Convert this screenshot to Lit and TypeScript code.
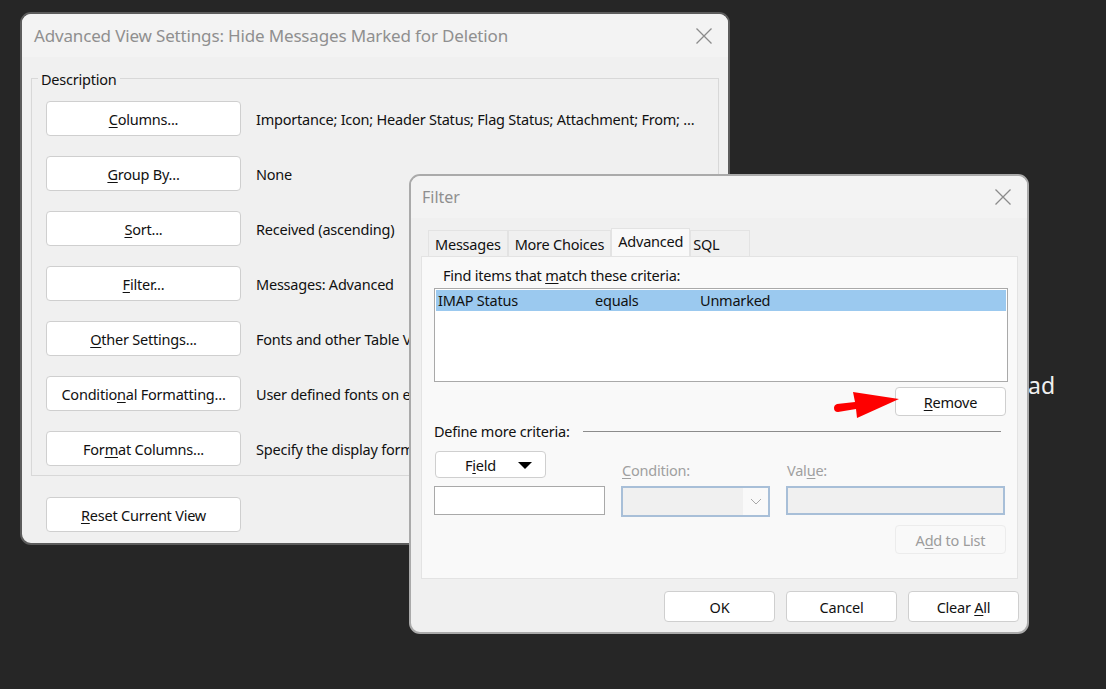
import { LitElement, html, css } from "lit";
import { customElement } from "lit/decorators.js";

const closeIcon = html`<svg class="x" viewBox="0 0 16 16" width="16" height="16"><path d="M.5.5l15 15M15.500.5l-15 15" stroke="#8b8b8b" stroke-width="1.300" fill="none"/></svg>`;

@customElement("app-root")
export class AppRoot extends LitElement {
  static styles = css`
    :host { display: block; position: relative; width: 1106px; height: 689px; overflow: hidden; background: #262626;
      font-family: "Noto Sans", "Open Sans", sans-serif; font-size: 14.5px; letter-spacing: -0.22px; color: #111; }
    u { text-underline-offset: 2px; text-decoration-thickness: 1px; }
    .bg-text { position: absolute; left: 1028px; top: 369px; color: #f0f0f0; font-size: 23px; line-height: 32px; letter-spacing: 0; }
    .win { position: absolute; box-sizing: border-box; display: flex; flex-direction: column; background: #f0f0f0; border: 2px solid #6e6e6e; border-radius: 11px; overflow: hidden; }
    .main { left: 20px; top: 12px; width: 710px; height: 533px; border-color: #5c5c5c; }
    .filter { left: 409px; top: 174px; width: 620px; height: 460px; border-color: #aaaaaa; }
    .title { flex: none; display: flex; align-items: center; justify-content: space-between; background: #f3f3f3; color: #8f8f8f; }
    .main .title { height: 43px; padding: 0 16px 0 12px; font-size: 17px; letter-spacing: -0.16px; }
    .filter .title { height: 42px; padding: 0 16px 0 11px; font-size: 16px; letter-spacing: 0; }
    .x { display: block; flex: none; }
    .btn { box-sizing: border-box; display: flex; align-items: center; justify-content: center; background: #fff; border: 1px solid #cfcfcf; border-radius: 4px; white-space: nowrap; flex: none; }
    .main-body { flex: 1; padding: 21px 9px 0; display: flex; flex-direction: column; }
    .group { position: relative; box-sizing: border-box; height: 398px; border: 1px solid #d8d8d8; padding: 22px 14px 0; display: flex; flex-direction: column; gap: 20px; }
    .legend { position: absolute; left: 6px; top: -9px; padding: 0 3px; background: #f0f0f0; line-height: 18px; }
    .row { display: flex; align-items: center; gap: 15px; height: 35px; white-space: nowrap; }
    .wide { width: 195px; height: 35px; }
    .reset { margin: 21px 0 0 15px; }
    .filter-body { flex: 1; display: flex; flex-direction: column; padding: 0 10px; }
    .tabs { display: flex; align-items: flex-end; height: 38px; padding-left: 7px; flex: none; }
    .tab { box-sizing: border-box; height: 26px; padding: 0 6px; display: flex; align-items: center; background: #f0f0f0; border: 1px solid #e3e3e3; border-bottom: none; margin-right: 0; }
    .tab.active { height: 28px; background: #f9f9f9; padding-bottom: 3px; }
    .tab.sql { width: 60px; padding-left: 2px; }
    .panel { box-sizing: border-box; width: 597px; height: 323px; background: #f9f9f9; border: 1px solid #e3e3e3; padding: 0 0 0 12px; display: flex; flex-direction: column; flex: none; }
    .find { margin: 9px 0 0 9px; line-height: 18px; height: 22px; }
    .list { box-sizing: border-box; width: 574px; height: 94px; background: #fff; border: 1px solid #a9a9a9; padding: 1px; flex: none; }
    .sel { display: grid; grid-template-columns: 157px 105px 1fr; height: 21px; line-height: 21px; padding-left: 2px; background: #9bc9ef; }
    .remove-row { display: flex; justify-content: flex-end; padding-right: 11px; margin-top: 5px; }
    .small { width: 111px; height: 29px; }
    .define { display: flex; align-items: center; gap: 13px; height: 18px; margin-top: 6px; padding-right: 16px; }
    .define i { flex: 1; height: 1px; background: #8c8c8c; }
    .fields { display: grid; grid-template-columns: 171px 149px 219px; column-gap: 16px; margin-top: 9px; height: 66px; align-items: end; }
    .fields > div { display: flex; flex-direction: column; }
    .field-btn { margin-left: 1px; margin-bottom: 8px; width: 111px; height: 27px; position: relative; padding-right: 20px; }
    .field-btn b { position: absolute; right: 13px; top: 10px; width: 0; height: 0; border: 7px solid transparent; border-top: 7px solid #000; border-bottom: none; }
    .lbl { color: #a0a0a0; line-height: 18px; margin-bottom: 7px; padding-left: 1px; }
    .input { box-sizing: border-box; height: 29px; background: #fff; border: 1px solid #a9a9a9; }
    .dis { background: #f0f0f0; border: 2px solid #a8bfd8; }
    .combo { height: 31px; margin-bottom: -2px; position: relative; }
    .combo span { position: absolute; right: 0; top: 0; bottom: 0; width: 25px; background: #f9f9f9; display: flex; align-items: center; justify-content: center; }
    .add-row { display: flex; justify-content: flex-end; padding-right: 11px; margin-top: 10px; }
    .add { background: #f9f9f9; border-color: #ececec; color: #9c9c9c; }
    .footer { display: flex; justify-content: flex-end; gap: 11px; margin-top: 12px; padding-right: 0; margin-right: -2px; }
    .footer .btn { width: 111px; height: 31px; }
    .arrow { position: absolute; left: 830px; top: 388px; }
  `;

  render() {
    const rows: [any, string, string][] = [
      [html`<u>C</u>olumns...`, "Importance; Icon; Header Status; Flag Status; Attachment; From; ...", ""],
      [html`<u>G</u>roup By...`, "None", ""],
      [html`<u>S</u>ort...`, "Received (ascending)", ""],
      [html`<u>F</u>ilter...`, "Messages: Advanced", ""],
      [html`<u>O</u>ther Settings...`, "Fonts and other Table View settings", ""],
      [html`Conditio<u>n</u>al Formatting...`, "User defined fonts on each message", ""],
      [html`For<u>m</u>at Columns...`, "Specify the display formats for each field", ""],
    ];
    return html`
      <div class="bg-text">ad</div>
      <section class="win main">
        <div class="title"><span>Advanced View Settings: Hide Messages Marked for Deletion</span>${closeIcon}</div>
        <div class="main-body">
          <div class="group">
            <span class="legend">Description</span>
            ${rows.map(r => html`<div class="row"><div class="btn wide">${r[0]}</div><span>${r[1]}</span></div>`)}
          </div>
          <div class="btn wide reset"><span><u>R</u>eset Current View</span></div>
        </div>
      </section>
      <section class="win filter">
        <div class="title"><span>Filter</span>${closeIcon}</div>
        <div class="filter-body">
          <div class="tabs">
            <div class="tab">Messages</div>
            <div class="tab">More Choices</div>
            <div class="tab active">Advanced</div>
            <div class="tab sql">SQL</div>
          </div>
          <div class="panel">
            <div class="find">Find items that <u>m</u>atch these criteria:</div>
            <div class="list"><div class="sel"><span>IMAP Status</span><span>equals</span><span>Unmarked</span></div></div>
            <div class="remove-row"><div class="btn small"><span><u>R</u>emove</span></div></div>
            <div class="define"><span>Define more criteria:</span><i></i></div>
            <div class="fields">
              <div><div class="btn field-btn"><span>F<u>i</u>eld</span><b></b></div><div class="input"></div></div>
              <div><span class="lbl"><u>C</u>ondition:</span><div class="input dis combo"><span><svg width="12" height="7" viewBox="0 0 12 7"><path d="M1 1l5 5 5-5" stroke="#a8a8a8" fill="none"/></svg></span></div></div>
              <div><span class="lbl">Val<u>u</u>e:</span><div class="input dis"></div></div>
            </div>
            <div class="add-row"><div class="btn small add"><span>A<u>d</u>d to List</span></div></div>
          </div>
          <div class="footer">
            <div class="btn">OK</div><div class="btn">Cancel</div><div class="btn"><span>Clear <u>A</u>ll</span></div>
          </div>
        </div>
      </section>
      <svg class="arrow" width="72" height="34" viewBox="830 388 72 34"><path d="M837 404L855 402L853 392L899 399L857 418L856 409L838 412Q834 412 834 408Q834 405 837 404Z" fill="#fe0000"/></svg>
    `;
  }
}
